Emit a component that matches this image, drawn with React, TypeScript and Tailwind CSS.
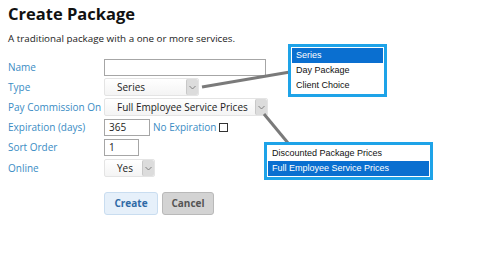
import { ReactNode } from "react";

const label = "text-[10px] text-[#3a8cc4] leading-[20px] whitespace-nowrap";

function Chevron() {
  return (
    <svg width="7" height="5" viewBox="0 0 7 5">
      <path d="M0.5 1 L3.5 4 L6.5 1" fill="none" stroke="#777" strokeWidth="0.9" />
    </svg>
  );
}

function FakeSelect({ value, width }: { value: string; width: string }) {
  return (
    <div
      className={`${width} h-[18px] flex items-stretch border border-[#e4e4e4] rounded-[2px] bg-gradient-to-b from-white to-[#f4f4f4]`}
    >
      <span className="flex-1 pl-[12px] text-[10px] leading-[17px] text-[#222] whitespace-nowrap">
        {value}
      </span>
      <span className="w-[12px] flex items-center justify-center bg-[#dcdcdc] border-l border-[#c8c8c8] rounded-[2px]">
        <Chevron />
      </span>
    </div>
  );
}

function Row({ name, children, className = "" }: { name: string; children: ReactNode; className?: string }) {
  return (
    <div className={`flex items-center h-[20px] ${className}`}>
      <div className={`w-[96px] ${label}`}>{name}</div>
      {children}
    </div>
  );
}

function Popup({ items, selected, className }: { items: string[]; selected: number; className: string }) {
  return (
    <div className={`absolute border-[3px] border-[#1ea3e8] bg-white p-[1px] ${className}`}>
      {items.map((item, i) => (
        <div
          key={item}
          className={`px-[4px] text-[9px] leading-[15px] whitespace-nowrap ${
            i === selected ? "bg-[#0a6fd0] text-white" : "text-[#111]"
          }`}
          style={{ fontFamily: "'Liberation Sans', Arial, sans-serif" }}
        >
          {item}
        </div>
      ))}
    </div>
  );
}

export default function App() {
  return (
    <div
      className="relative w-[480px] h-[254px] bg-white overflow-hidden px-[8px]"
      style={{ fontFamily: "'Open Sans', sans-serif" }}
    >
      <h1 className="pt-[2px] text-[16.5px] font-bold leading-[24px] text-[#111]">Create Package</h1>
      <p className="mt-[6px] text-[9.8px] leading-[14px] text-[#222]">
        A traditional package with a one or more services.
      </p>

      <div className="mt-[11px] flex flex-col">
        <Row name="Name">
          <div className="w-[162px] h-[17px] border border-[#a6a6a6] bg-white" />
        </Row>
        <Row name="Type">
          <FakeSelect value="Series" width="w-[95px]" />
        </Row>
        <Row name="Pay Commission On">
          <FakeSelect value="Full Employee Service Prices" width="w-[164px]" />
        </Row>
        <Row name="Expiration (days)">
          <div className="w-[46px] h-[17px] border border-[#a6a6a6] bg-white pl-[4px] text-[10px] leading-[15px] text-[#222]">
            365
          </div>
          <span className={`ml-[3px] ${label}`}>No Expiration</span>
          <span className="ml-[3px] w-[9px] h-[9px] border border-[#333] bg-white" />
        </Row>
        <Row name="Sort Order">
          <div className="w-[35px] h-[17px] border border-[#a6a6a6] bg-white pl-[4px] text-[10px] leading-[15px] text-[#222]">
            1
          </div>
        </Row>
        <Row name="Online" className="mt-[1px]">
          <FakeSelect value="Yes" width="w-[51px]" />
        </Row>
      </div>

      <div className="mt-[14px] ml-[96px] flex gap-[4px]">
        <button className="w-[54px] h-[23px] rounded-[3px] border border-[#c9ddf0] bg-[#e6f0fa] text-[10px] font-bold text-[#2f6aa6]">
          Create
        </button>
        <button className="w-[52px] h-[23px] rounded-[3px] border border-[#b9b9b9] bg-[#d3d3d3] text-[10px] font-bold text-[#555]">
          Cancel
        </button>
      </div>

      <svg className="absolute left-0 top-0 pointer-events-none" width="480" height="254">
        <line x1="202" y1="87" x2="290" y2="72" stroke="#7a7a7a" strokeWidth="3" />
        <line x1="264" y1="114" x2="288" y2="143" stroke="#7a7a7a" strokeWidth="3" />
      </svg>

      <Popup
        items={["Series", "Day Package", "Client Choice"]}
        selected={0}
        className="left-[288px] top-[44px] w-[99px]"
      />
      <Popup
        items={["Discounted Package Prices", "Full Employee Service Prices"]}
        selected={1}
        className="left-[264px] top-[142px] w-[169px]"
      />
    </div>
  );
}
